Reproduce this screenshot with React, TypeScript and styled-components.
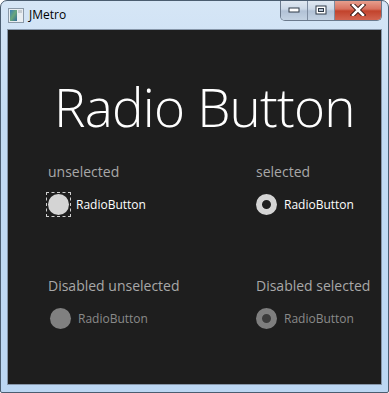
import React from 'react';
import styled, { createGlobalStyle } from 'styled-components';

const GlobalStyle = createGlobalStyle`
    html, body {
        margin: 0;
        padding: 0;
        background: #fff;
    }
    body {
        font-family: "Open Sans", "Noto Sans", sans-serif;
    }
`;

const Window = styled.div`
    width: 389px;
    height: 393px;
    box-sizing: border-box;
    border: 1px solid #4b5d70;
    border-radius: 7px 7px 2px 2px;
    background: linear-gradient(180deg, #d6e6f6 0%, #c3dbf3 30%, #bcd7f3 100%);
    display: flex;
    flex-direction: column;
    padding: 0 6px 7px 6px;
    overflow: hidden;
`;

const TitleBar = styled.div`
    height: 28px;
    display: flex;
    align-items: flex-start;
`;

const AppIcon = styled.svg`
    margin: 7px 5px 0 1px;
    flex: none;
`;

const Title = styled.span`
    margin-top: 6px;
    font-family: "Open Sans", "Noto Sans", sans-serif;
    font-size: 12px;
    color: #000;
    line-height: 16px;
`;

const Caption = styled.div`
    margin-left: auto;
    margin-top: -1px;
    display: flex;
    height: 20px;
    border: 1px solid #6b7a8d;
    border-top: none;
    border-radius: 0 0 5px 5px;
    overflow: hidden;
`;

const CaptionButton = styled.div<{ $close?: boolean }>`
    width: ${p => (p.$close ? 46 : 26)}px;
    display: flex;
    align-items: center;
    justify-content: center;
    background: ${p => p.$close
        ? 'linear-gradient(180deg, #e8a493 0%, #d8725f 45%, #c2432c 55%, #d26450 100%)'
        : 'linear-gradient(180deg, #e2eaf3 0%, #ccd9e7 45%, #b2c2d6 55%, #c3d2e3 100%)'};
    & + & {
        border-left: 1px solid #7d8ca0;
    }
`;

const Content = styled.div`
    flex: 1;
    border: 1px solid #8797aa;
    background: #1e1e1e;
    display: flex;
    flex-direction: column;
    padding: 0 0 0 40px;
`;

const Heading = styled.h1`
    margin: 44px 0 0 6px;
    font-family: "Open Sans", "Noto Sans", sans-serif;
    font-weight: 300;
    font-size: 53px;
    line-height: 66px;
    color: #fff;
    letter-spacing: -0.8px;
    white-space: nowrap;
`;

const Grid = styled.div`
    display: grid;
    grid-template-columns: 208px 1fr;
    row-gap: 59px;
    margin-top: 22px;
`;

const Cell = styled.div`
    display: flex;
    flex-direction: column;
`;

const Label = styled.div`
    font-family: "Open Sans", "Noto Sans", sans-serif;
    font-size: 14px;
    line-height: 20px;
    color: #a8a8a8;
`;

const Radio = styled.div<{ $disabled?: boolean }>`
    margin-top: 10px;
    margin-left: ${p => (p.$disabled ? 2 : 0)}px;
    display: flex;
    align-items: center;
    gap: 5px;
`;

const Focus = styled.div<{ $focused?: boolean }>`
    width: 25px;
    height: 25px;
    margin-left: -2px;
    box-sizing: border-box;
    border: 1px dashed ${p => (p.$focused ? '#cfcfcf' : 'transparent')};
    display: flex;
    align-items: center;
    justify-content: center;
`;

const Dot = styled.div<{ $selected?: boolean; $disabled?: boolean }>`
    width: 21px;
    height: 21px;
    border-radius: 50%;
    box-sizing: border-box;
    background: ${p => (p.$selected ? (p.$disabled ? '#3c3c3c' : '#1e1e1e') : p.$disabled ? '#808080' : '#d4d4d4')};
    border: ${p => (p.$selected ? `6px solid ${p.$disabled ? '#7e7e7e' : '#d4d4d4'}` : 'none')};
`;

const RadioText = styled.span<{ $disabled?: boolean }>`
    font-family: "Open Sans", "Noto Sans", sans-serif;
    font-size: 12px;
    color: ${p => (p.$disabled ? '#8a8a8a' : '#fff')};
`;

type RadioProps = { label: string; selected?: boolean; disabled?: boolean; focused?: boolean };

function RadioItem({ label, selected, disabled, focused }: RadioProps) {
    return (
        <Cell>
            <Label>{label}</Label>
            <Radio $disabled={disabled && !selected}>
                <Focus $focused={focused}>
                    <Dot $selected={selected} $disabled={disabled} />
                </Focus>
                <RadioText $disabled={disabled}>RadioButton</RadioText>
            </Radio>
        </Cell>
    );
}

export default function App(): React.ReactElement {
    return (
        <>
            <GlobalStyle />
            <Window>
                <TitleBar>
                    <AppIcon width="16" height="15" viewBox="0 0 16 15">
                        <defs>
                            <linearGradient id="ic" x1="0" y1="0" x2="1" y2="1">
                                <stop offset="0" stopColor="#3c7fb8" />
                                <stop offset="0.5" stopColor="#6aa67a" />
                                <stop offset="1" stopColor="#2f6a9c" />
                            </linearGradient>
                        </defs>
                        <rect x="0.5" y="0.5" width="15" height="14" fill="#e9eef2" stroke="#8a99a8" />
                        <rect x="2" y="2" width="7" height="11" fill="url(#ic)" />
                        <rect x="10" y="2" width="4" height="3" fill="#c6ccd2" />
                    </AppIcon>
                    <Title>JMetro</Title>
                    <Caption>
                        <CaptionButton>
                            <svg width="12" height="6" viewBox="0 0 12 6">
                                <rect x="1" y="1" width="10" height="4" fill="#fff" stroke="#2f3a48" />
                            </svg>
                        </CaptionButton>
                        <CaptionButton>
                            <svg width="12" height="10" viewBox="0 0 12 10">
                                <rect x="1" y="1" width="10" height="8" fill="#fff" stroke="#2f3a48" />
                                <rect x="3.5" y="3.5" width="5" height="3" fill="#b9c6d6" stroke="#2f3a48" />
                            </svg>
                        </CaptionButton>
                        <CaptionButton $close>
                            <svg width="16" height="12" viewBox="0 0 16 12">
                                <path d="M3 1 L13 11 M13 1 L3 11" stroke="#3b1e1a" strokeWidth="4.5" strokeLinecap="square" />
                                <path d="M3 1 L13 11 M13 1 L3 11" stroke="#fff" strokeWidth="2.5" strokeLinecap="square" />
                            </svg>
                        </CaptionButton>
                    </Caption>
                </TitleBar>
                <Content>
                    <Heading>Radio Button</Heading>
                    <Grid>
                        <RadioItem label="unselected" focused />
                        <RadioItem label="selected" selected />
                        <RadioItem label="Disabled unselected" disabled />
                        <RadioItem label="Disabled selected" selected disabled />
                    </Grid>
                </Content>
            </Window>
        </>
    );
}
